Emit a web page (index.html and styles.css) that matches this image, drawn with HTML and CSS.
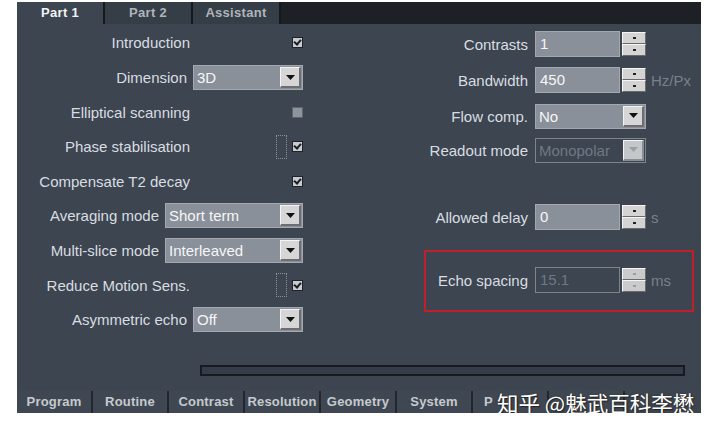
FILE: index.html
```html
<!DOCTYPE html>
<html>
<head>
<meta charset="utf-8">
<link rel="stylesheet" href="styles.css">
</head>
<body>
<div class="panel">
  <div class="tabbar">
    <div class="ttab active">Part 1</div>
    <div class="ttab">Part 2</div>
    <div class="ttab">Assistant</div>
  </div>
  <div class="main">
    <div class="left">
      <div class="crow"><span class="clabel">Introduction</span><span class="check on"></span></div>
      <div class="srow"><span class="lbl">Dimension</span><span class="select w110"><span class="val">3D</span><span class="arrow"><svg width="9" height="5" viewBox="0 0 9 5"><path d="M0 0H9L4.5 5Z" fill="#111"/></svg></span></span></div>
      <div class="crow"><span class="clabel">Elliptical scanning</span><span class="check off"></span></div>
      <div class="crow"><span class="clabel">Phase stabilisation</span><span class="dots"></span><span class="check on"></span></div>
      <div class="crow"><span class="clabel">Compensate T2 decay</span><span class="check on"></span></div>
      <div class="srow"><span class="lbl">Averaging mode</span><span class="select w138"><span class="val">Short term</span><span class="arrow"><svg width="9" height="5" viewBox="0 0 9 5"><path d="M0 0H9L4.5 5Z" fill="#111"/></svg></span></span></div>
      <div class="srow"><span class="lbl">Multi-slice mode</span><span class="select w138"><span class="val">Interleaved</span><span class="arrow"><svg width="9" height="5" viewBox="0 0 9 5"><path d="M0 0H9L4.5 5Z" fill="#111"/></svg></span></span></div>
      <div class="crow"><span class="clabel">Reduce Motion Sens.</span><span class="dots"></span><span class="check on"></span></div>
      <div class="srow"><span class="lbl">Asymmetric echo</span><span class="select w110"><span class="val">Off</span><span class="arrow"><svg width="9" height="5" viewBox="0 0 9 5"><path d="M0 0H9L4.5 5Z" fill="#111"/></svg></span></span></div>
    </div>
    <div class="right">
      <div class="rrow r-contrasts"><span class="rlabel">Contrasts</span><span class="spinbox"><span class="val">1</span><span class="spins"><span class="sp"><i class="up"></i></span><span class="sp"><i class="dn"></i></span></span></span></div>
      <div class="rrow r-gap10"><span class="rlabel">Bandwidth</span><span class="spinbox"><span class="val">450</span><span class="spins"><span class="sp"><i class="up"></i></span><span class="sp"><i class="dn"></i></span></span></span><span class="unit">Hz/Px</span></div>
      <div class="rrow r-gap10"><span class="rlabel">Flow comp.</span><span class="select w111"><span class="val">No</span><span class="arrow"><svg width="9" height="5" viewBox="0 0 9 5"><path d="M0 0H9L4.5 5Z" fill="#111"/></svg></span></span></div>
      <div class="rrow r-gap8"><span class="rlabel">Readout mode</span><span class="select w111 disabled"><span class="val">Monopolar</span><span class="arrow"><svg width="9" height="5" viewBox="0 0 9 5"><path d="M0 0H9L4.5 5Z" fill="#9aa0a6"/></svg></span></span></div>
      <div class="rrow r-gap41"><span class="rlabel">Allowed delay</span><span class="spinbox"><span class="val">0</span><span class="spins"><span class="sp"><i class="up"></i></span><span class="sp"><i class="dn"></i></span></span></span><span class="unit">s</span></div>
      <div class="redbox">
        <div class="rrow"><span class="rlabel narrow">Echo spacing</span><span class="spinbox disabled"><span class="val">15.1</span><span class="spins"><span class="sp"><i class="up"></i></span><span class="sp"><i class="dn"></i></span></span></span><span class="unit">ms</span></div>
      </div>
    </div>
  </div>
  <div class="progress"></div>
  <div class="btabs">
    <div class="btab">Program</div>
    <div class="btab">Routine</div>
    <div class="btab">Contrast</div>
    <div class="btab">Resolution</div>
    <div class="btab">Geometry</div>
    <div class="btab">System</div>
    <div class="btab left-text">P</div>
    <div class="btab"></div>
  </div>
  <div class="watermark">知乎 @魅武百科李懋</div>
</div>
</body>
</html>
```
FILE: styles.css
```css
html, body { margin: 0; padding: 0; background: #ffffff; }
body { font-family: "Liberation Sans", Arial, sans-serif; }

.panel {
  position: relative;
  margin-left: 17px;
  margin-top: 2px;
  width: 684px;
  height: 411px;
  background: #3c4550;
  display: flex;
  flex-direction: column;
}

.tabbar {
  height: 22px;
  flex: none;
  background: #1d2126;
  display: flex;
}
.ttab {
  width: 86px;
  border-right: 2px solid #15181c;
  background: #353d47;
  color: #aeb4ba;
  font-weight: bold;
  font-size: 13px;
  line-height: 22px;
  text-align: center;
  letter-spacing: 0.3px;
}
.ttab.active { background: #3c4550; color: #f2f4f6; }

.main {
  height: 337px;
  flex: none;
  display: flex;
}

.left {
  width: 286px;
  flex: none;
  padding-top: 1.7px;
  display: grid;
  grid-auto-rows: 34.6px;
  align-content: start;
}
.crow, .srow {
  display: flex;
  align-items: center;
  color: #d9dde1;
  font-size: 15px;
}
.srow { justify-content: flex-end; }
.clabel { width: 173px; text-align: right; }
.lbl { margin-right: 6px; }

.check {
  width: 9px;
  height: 9px;
  margin-left: auto;
  border: 1px solid #1e2329;
  position: relative;
}
.check.on { background: #c8ccd1; }
.check.on::after {
  content: "";
  position: absolute;
  left: 2px;
  top: 0px;
  width: 3px;
  height: 5px;
  border-right: 2px solid #1a1e23;
  border-bottom: 2px solid #1a1e23;
  transform: rotate(40deg);
}
.check.off { background: #8e949b; border-color: #5d646c; }
.dots {
  margin-left: auto;
  width: 9px;
  height: 22px;
  border: 1px dotted #8b9299;
  margin-right: 5px;
}
.dots + .check { margin-left: 0; }

.select {
  height: 25px;
  box-sizing: border-box;
  background: #8a9099;
  border: 1px solid #a3a8ae;
  display: flex;
  align-items: center;
  justify-content: space-between;
  color: #f4f6f8;
  font-size: 15px;
}
.select .val { padding-left: 3px; }
.w110 { width: 110px; }
.w138 { width: 138px; }
.w111 { width: 111px; }
.arrow {
  width: 21px;
  height: 21px;
  box-sizing: border-box;
  margin-right: 1px;
  background: #d6d6d6;
  border-top: 1px solid #f4f4f4;
  border-left: 1px solid #f4f4f4;
  border-right: 2px solid #6e6e6e;
  border-bottom: 2px solid #6e6e6e;
  display: flex;
  align-items: center;
  justify-content: center;
}
.select.disabled { background: #3c4550; border-color: #7d848b; color: #6f7983; }
.select.disabled .arrow { background: #c4c7ca; border-right-color: #8a8e92; border-bottom-color: #8a8e92; }

.right {
  flex: 1;
  padding-top: 7px;
  display: flex;
  flex-direction: column;
}
.rrow {
  height: 26px;
  display: flex;
  align-items: center;
  color: #d9dde1;
  font-size: 15px;
}
.r-gap10 { margin-top: 10px; }
.r-gap8 { margin-top: 8px; }
.r-gap41 { margin-top: 41px; }
.rlabel { width: 225px; text-align: right; margin-right: 7px; }
.rlabel.narrow { width: 102px; }

.spinbox {
  width: 111px;
  height: 26px;
  display: flex;
  align-items: stretch;
}
.spinbox .val {
  width: 85px;
  box-sizing: border-box;
  background: #8a9099;
  border: 1px solid #a3a8ae;
  color: #f4f6f8;
  padding-left: 4px;
  line-height: 24px;
}
.spins {
  margin-left: 2px;
  width: 24px;
  display: flex;
  flex-direction: column;
  padding-top: 1px;
}
.sp {
  height: 12px;
  box-sizing: border-box;
  background: #d4d4d4;
  border-top: 1px solid #f6f6f6;
  border-left: 1px solid #f6f6f6;
  border-right: 1px solid #6a6a6a;
  border-bottom: 1px solid #6a6a6a;
  display: flex;
  align-items: center;
  justify-content: center;
}
.sp i { display: block; width: 3px; height: 2px; background: #222; }
.spinbox.disabled .val { background: #3c4550; border-color: #7d848b; color: #6f7983; }
.spinbox.disabled .sp { background: #c9cbcd; }
.spinbox.disabled .sp i { background: #9a9ea2; }
.unit { margin-left: 5px; color: #78818a; font-size: 15px; }

.redbox {
  margin-top: 20px;
  margin-left: 121px;
  width: 270px;
  height: 62px;
  box-sizing: border-box;
  border: 2px solid #c21f2a;
  padding-top: 15px;
}

.progress {
  flex: none;
  margin-top: 4px;
  margin-left: 183px;
  width: 485px;
  height: 11px;
  box-sizing: border-box;
  border: 2px solid #171b1f;
  background: #353e48;
}

.btabs {
  flex: none;
  margin-top: 15px;
  height: 22px;
  display: flex;
}
.btab {
  width: 74px;
  border-right: 2px solid #22272d;
  background: #3f4852;
  color: #c6cacf;
  font-weight: bold;
  font-size: 13px;
  line-height: 22px;
  text-align: center;
  letter-spacing: 0.2px;
}
.btab.left-text { text-align: left; padding-left: 11px; width: 63px; }

.watermark {
  position: absolute;
  left: 480px;
  top: 385px;
  font-family: "Noto Sans CJK SC", sans-serif;
  font-size: 21.5px;
  color: #ffffff;
  text-shadow: 0 0 2px #333, 1px 1px 1px #222;
  white-space: nowrap;
}
```
